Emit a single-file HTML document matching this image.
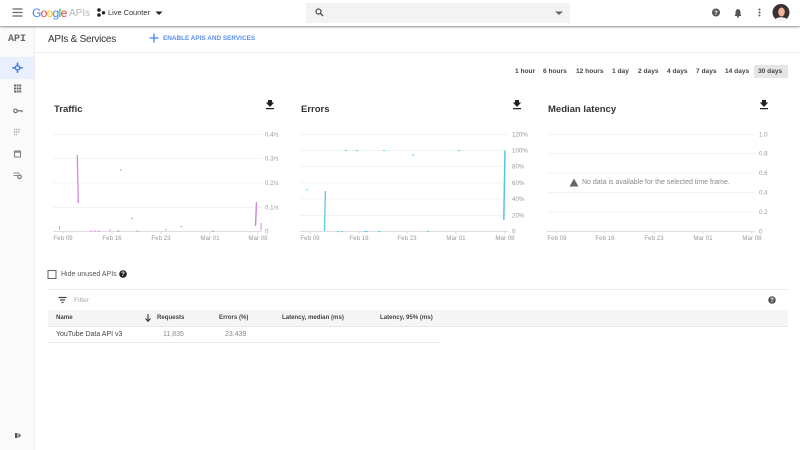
<!DOCTYPE html>
<html><head><meta charset="utf-8"><style>
html,body{margin:0;padding:0;background:#fff;width:800px;height:450px;overflow:hidden;font-family:"Liberation Sans",sans-serif;color:#333}
#w{position:absolute;left:0;top:0;width:800px;height:450px;overflow:hidden;background:#fff;filter:blur(.35px)}
.a{position:absolute;white-space:nowrap}
svg{position:absolute;left:0;top:0}
.t{font-size:6.6px;color:#444;font-weight:bold;top:67.5px;line-height:8px}
.h{font-size:6.1px;color:#444;font-weight:bold;top:314px;line-height:8px}
svg text{font-family:"Liberation Sans",sans-serif}
.g line{stroke:#f3f3f3;stroke-width:1}
.l text{font-size:6.2px;fill:#9a9a9a}
</style></head><body><div id="w">
<div class="a" style="left:0;top:27px;width:34px;height:423px;background:#fafafa;border-right:1px solid #eee"></div>
<div class="a" style="left:0;top:57px;width:34px;height:22px;background:#e8f0fe"></div>
<div class="a" style="left:0;top:0;width:800px;height:26px;background:#fff;box-shadow:0 1px 2px rgba(0,0,0,.45)"></div>
<div class="a" style="left:306px;top:3px;width:264px;height:20px;background:#f3f3f3"></div>
<div class="a" style="left:35px;top:52px;width:765px;height:1px;background:#eeeeee"></div>
<div class="a" style="left:754px;top:65px;width:34px;height:13px;background:#e6e6e6"></div>
<div class="a" style="left:48px;top:289px;width:740px;height:1px;background:#eee"></div>
<div class="a" style="left:48px;top:310px;width:740px;height:17px;background:#f5f5f5;border-bottom:1px solid #e8e8e8;box-sizing:border-box"></div>
<div class="a" style="left:48px;top:342px;width:392px;height:1px;background:#e8e8e8"></div>

<svg width="800" height="450" viewBox="0 0 800 450">
<!-- hamburger -->
<path d="M12.500 9h10M12.500 12.500h10M12.500 16h10" stroke="#666" stroke-width="1.300" fill="none"/>
<!-- project dots -->
<g fill="#222"><circle cx="99" cy="10" r="1.800"/><circle cx="99" cy="15" r="1.800"/><circle cx="103.500" cy="12.800" r="1.700"/></g>
<path d="M155.500 11.500h7l-3.500 3.500z" fill="#222"/>
<path d="M555 11.500h8l-4 3.500z" fill="#666"/>
<!-- search -->
<circle cx="318.500" cy="11.500" r="2.500" fill="none" stroke="#555" stroke-width="1.300"/><path d="M320.500 13.500l2.500 2.500" stroke="#555" stroke-width="1.500"/>
<!-- help -->
<circle cx="716" cy="12.500" r="4" fill="#555"/><text x="716" y="14.800" font-size="6" font-weight="bold" fill="#fff" text-anchor="middle">?</text>
<!-- bell -->
<path d="M734.500 16c.8-.8 1-1.500 1-3.500 0-2 1-3.200 2.500-3.500 1.500.3 2.500 1.500 2.500 3.500 0 2 .2 2.700 1 3.500z" fill="#555"/><circle cx="738" cy="16.800" r="1" fill="#555"/>
<!-- dots -->
<g fill="#555"><circle cx="759.500" cy="9.500" r="1"/><circle cx="759.500" cy="12.500" r="1"/><circle cx="759.500" cy="15.500" r="1"/></g>
<!-- avatar -->
<circle cx="781" cy="12.500" r="8.500" fill="#3a3230"/><ellipse cx="781.500" cy="12" rx="3.300" ry="4.500" fill="#eeb598"/><path d="M775 19.500c2-3 10-3 12.500 0-2 1.700-4 2-6.500 2s-4.500-.6-6-2z" fill="#f4f1ee"/>
<!-- plus -->
<path d="M154 33.500v9M149.500 38h9" stroke="#4285f4" stroke-width="1.300"/>

<!-- sidebar icons -->
<g fill="none" stroke="#4a7fe0"><circle cx="17.500" cy="67.800" r="2.200" stroke-width="1.500"/><path d="M17.500 62.500v3M17.500 70v3M12.300 67.800h3M19.700 67.800h3" stroke-width="1.600"/></g>
<path d="M14 85.500h7.500M14 88.500h7.500M14 91.500h7.500" stroke="#666" stroke-width="2" stroke-dasharray="2 .6"/>
<g fill="none" stroke="#666" stroke-width="1.100"><circle cx="15.500" cy="110.800" r="1.800"/><path d="M17.300 110.800h4.700v1.500"/></g>
<path d="M14 129.500h6.500M14 132h5.500M14 134.500h3" stroke="#aaa" stroke-width="1.500" stroke-dasharray="1.300 .8"/>
<rect x="14.500" y="151" width="6" height="6" fill="none" stroke="#888" stroke-width="1.100"/><path d="M14.500 152h6" stroke="#888" stroke-width="1.500"/>
<path d="M13.500 173h6M13.500 175.500h4" stroke="#888" stroke-width="1.100"/><circle cx="19.500" cy="176.800" r="1.800" fill="none" stroke="#777" stroke-width="1.200"/>
<path d="M15 433h2.500v5H15zM18.500 433l2.500 2.500-2.500 2.500z" fill="#555"/>

<!-- download icons -->
<g fill="#222">
<path d="M268 100h4v2.500h2.200L270 107l-4.200-4.500H268zM266 108h8v1.200h-8z"/>
<path d="M515 100h4v2.500h2.200L517 107l-4.200-4.500H515zM513 108h8v1.200h-8z"/>
<path d="M762 100h4v2.500h2.200L764 107l-4.200-4.500H762zM760 108h8v1.200h-8z"/>
</g>

<!-- Grids -->
<g class="g">
<line x1="53" x2="262" y1="134.500" y2="134.500"/><line x1="53" x2="262" y1="158.500" y2="158.500"/><line x1="53" x2="262" y1="183" y2="183"/><line x1="53" x2="262" y1="207.500" y2="207.500"/>
<line x1="300" x2="508" y1="134.500" y2="134.500"/><line x1="300" x2="508" y1="150.500" y2="150.500"/><line x1="300" x2="508" y1="166.500" y2="166.500"/><line x1="300" x2="508" y1="183" y2="183"/><line x1="300" x2="508" y1="199" y2="199"/><line x1="300" x2="508" y1="215.500" y2="215.500"/>
<line x1="547" x2="755" y1="134.500" y2="134.500"/><line x1="547" x2="755" y1="153.500" y2="153.500"/><line x1="547" x2="755" y1="173" y2="173"/><line x1="547" x2="755" y1="192.500" y2="192.500"/><line x1="547" x2="755" y1="212" y2="212"/>
</g>
<g stroke="#ddd" stroke-width="1">
<line x1="53" x2="262" y1="231.500" y2="231.500"/><line x1="300" x2="508" y1="231.500" y2="231.500"/><line x1="547" x2="755" y1="231.500" y2="231.500"/>
<path d="M63 231v3M112 231v3M161 231v3M210 231v3M258 231v3M310 231v3M359 231v3M407 231v3M456 231v3M505 231v3M557 231v3M605 231v3M654 231v3M703 231v3M752 231v3"/>
</g>
<!-- Traffic data -->
<g stroke="#d69be0" stroke-width="1.200" fill="none">
<path d="M77.300 155L78.300 203" stroke="#cf8adc" stroke-width="1.300"/>
<path d="M59.500 226v3.500"/>
<path d="M120 170h1.800M131 218.500h1.800M165.500 229.500h1.500M180.500 226.500h1.800"/>
<path d="M256.500 202L255.500 226" stroke-width="1.500" stroke="#cf8adc"/>
<path d="M261 223v7"/>
<path d="M90 231h1.500M94 231h1.500M98 231h1.500M109.500 230h1.500M117 231h2.500M136.500 231h2M212 231h2"/>
</g>
<!-- Errors data -->
<g stroke="#71d0e8" stroke-width="1.200" fill="none">
<path d="M325.400 191L324.500 231" stroke="#58c6e2" stroke-width="1.300"/>
<path d="M505 150.500L503.800 220" stroke="#58c6e2" stroke-width="1.500"/>
<path d="M345 150.500h2M356 150.500h2M383 150.500h2M412 155h2M458 150.500h2M306 190h1.500"/>
<path d="M337 231.500h2M341 231.500h2M364 231.500h4M378 231.500h2.500M427 231.500h2"/>
</g>
<!-- warning -->
<path d="M574 178.500l4.500 8h-9z" fill="#666"/>

<g class="l">
<text x="265" y="136.500">0.4/s</text><text x="265" y="160.500">0.3/s</text><text x="265" y="185">0.2/s</text><text x="265" y="209.500">0.1/s</text><text x="265" y="233.500">0</text>
<text x="512" y="136.500">120%</text><text x="512" y="152.500">100%</text><text x="512" y="168.500">80%</text><text x="512" y="185">60%</text><text x="512" y="201">40%</text><text x="512" y="217.500">20%</text><text x="512" y="233.500">0</text>
<text x="759" y="136.500">1.0</text><text x="759" y="155.500">0.8</text><text x="759" y="175">0.6</text><text x="759" y="194.500">0.4</text><text x="759" y="214">0.2</text><text x="759" y="233.500">0</text>
</g>
<g class="l" text-anchor="middle">
<text x="63" y="240">Feb 09</text><text x="112" y="240">Feb 16</text><text x="161" y="240">Feb 23</text><text x="210" y="240">Mar 01</text><text x="258" y="240">Mar 08</text>
<text x="310" y="240">Feb 09</text><text x="359" y="240">Feb 16</text><text x="407" y="240">Feb 23</text><text x="456" y="240">Mar 01</text><text x="505" y="240">Mar 08</text>
<text x="557" y="240">Feb 09</text><text x="605" y="240">Feb 16</text><text x="654" y="240">Feb 23</text><text x="703" y="240">Mar 01</text><text x="752" y="240">Mar 08</text>
</g>
<!-- checkbox, help -->
<rect x="48" y="270.500" width="8" height="8" fill="#fff" stroke="#666" stroke-width="1"/>
<circle cx="123" cy="274" r="3.800" fill="#222"/><text x="123" y="276.200" font-size="6" font-weight="bold" fill="#fff" text-anchor="middle">?</text>
<circle cx="772" cy="300" r="3.800" fill="#555"/><text x="772" y="302.200" font-size="6" font-weight="bold" fill="#fff" text-anchor="middle">?</text>
<!-- filter -->
<path d="M58.500 297.500h8M60 300h5M61.500 302.500h2" stroke="#444" stroke-width="1.200"/>
<!-- sort arrow -->
<path d="M148 314v7M145.500 318.500l2.500 2.800 2.500-2.800" stroke="#333" stroke-width="1.100" fill="none"/>
</svg>

<div class="a" style="left:32px;top:5px;font-size:12px;line-height:16px;letter-spacing:-.7px"><span style="color:#4285f4">G</span><span style="color:#ea4335">o</span><span style="color:#fbbc05">o</span><span style="color:#4285f4">g</span><span style="color:#34a853">l</span><span style="color:#ea4335">e</span></div>
<div class="a" style="left:69px;top:6px;font-size:10px;line-height:16px;color:#b5b5b5">APIs</div>
<div class="a" style="left:108px;top:8px;font-size:7.400px;line-height:10px;color:#333">Live Counter</div>
<div class="a" style="left:8px;top:34px;font-family:'Liberation Mono',monospace;font-weight:bold;font-size:10px;line-height:12px;color:#666">API</div>
<div class="a" style="left:48px;top:33px;font-size:10px;line-height:13px;letter-spacing:-.25px;color:#333">APIs &amp; Services</div>
<div class="a" style="left:163px;top:34px;font-size:6.400px;line-height:9px;font-weight:bold;color:#5b8def">ENABLE APIS AND SERVICES</div>

<div class="a t" style="left:515px">1 hour</div>
<div class="a t" style="left:543px">6 hours</div>
<div class="a t" style="left:576px">12 hours</div>
<div class="a t" style="left:612px">1 day</div>
<div class="a t" style="left:638px">2 days</div>
<div class="a t" style="left:667px">4 days</div>
<div class="a t" style="left:696px">7 days</div>
<div class="a t" style="left:725px">14 days</div>
<div class="a t" style="left:758px">30 days</div>

<div class="a" style="left:54px;top:104px;font-size:9.500px;line-height:12px;font-weight:bold;color:#333">Traffic</div>
<div class="a" style="left:301px;top:104px;font-size:9.500px;line-height:12px;font-weight:bold;color:#333">Errors</div>
<div class="a" style="left:548px;top:104px;font-size:9.500px;line-height:12px;font-weight:bold;color:#333">Median latency</div>
<div class="a" style="left:582px;top:178px;font-size:7px;line-height:9px;color:#8a8a8a">No data is available for the selected time frame.</div>

<div class="a" style="left:61px;top:270px;font-size:7px;line-height:9px;color:#555">Hide unused APIs</div>
<div class="a" style="left:74px;top:296px;font-size:6.800px;line-height:9px;color:#aaa">Filter</div>
<div class="a h" style="left:56px">Name</div>
<div class="a h" style="left:157px">Requests</div>
<div class="a h" style="left:219px">Errors (%)</div>
<div class="a h" style="left:282px">Latency, median (ms)</div>
<div class="a h" style="left:380px">Latency, 95% (ms)</div>
<div class="a" style="left:56px;top:330px;font-size:7px;line-height:9px;color:#444">YouTube Data API v3</div>
<div class="a" style="left:163px;top:330px;font-size:7px;line-height:9px;color:#888">11,835</div>
<div class="a" style="left:225px;top:330px;font-size:7px;line-height:9px;color:#888">23.439</div>
</div></body></html>
